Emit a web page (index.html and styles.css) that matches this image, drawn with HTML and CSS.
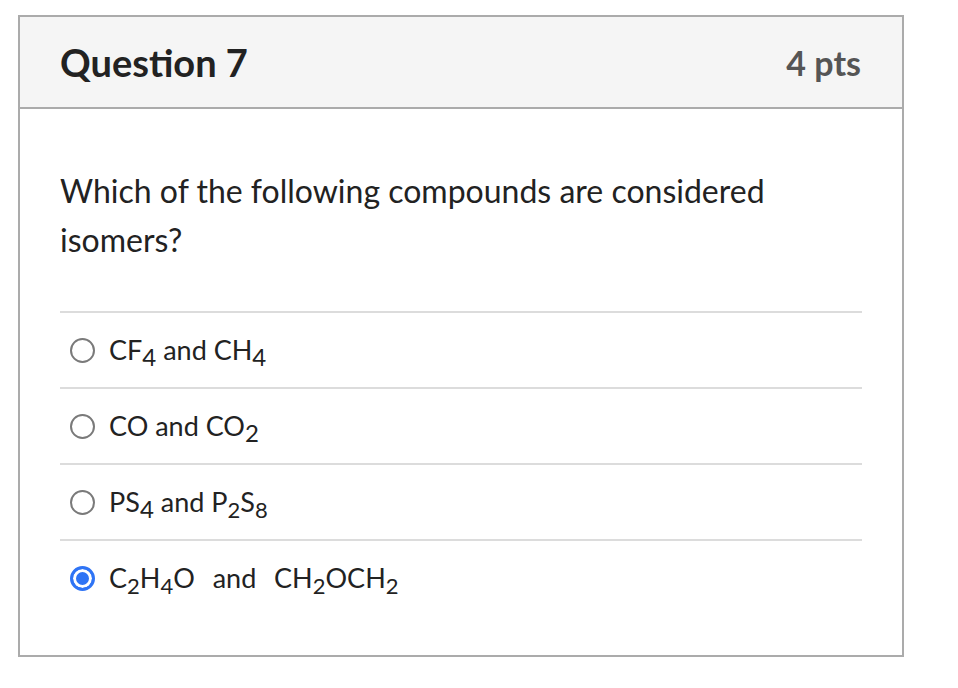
FILE: index.html
```html
<!DOCTYPE html>
<html lang="en">
<head>
<meta charset="utf-8">
<title>Question 7</title>
<link rel="stylesheet" href="styles.css">
</head>
<body>
<div class="card">
  <div class="card-header">
    <h2 class="q-title">Question 7</h2>
    <div class="q-pts">4 pts</div>
  </div>
  <div class="card-body">
    <p class="q-text">Which of the following compounds are considered isomers?</p>
    <ul class="answers">
      <li class="answer">
        <span class="radio"></span>
        <span class="label">CF<sub class="s1">4</sub> and CH<sub class="s1">4</sub></span>
      </li>
      <li class="answer">
        <span class="radio"></span>
        <span class="label">CO and CO<sub class="s1">2</sub></span>
      </li>
      <li class="answer">
        <span class="radio"></span>
        <span class="label">PS<sub class="s1">4</sub> and P<sub class="s2">2</sub>S<sub class="s2">8</sub></span>
      </li>
      <li class="answer">
        <span class="radio checked"></span>
        <span class="label wide">C<sub class="s3">2</sub>H<sub class="s3">4</sub>O&nbsp; and&nbsp; CH<sub class="s3">2</sub>OCH<sub class="s3">2</sub></span>
      </li>
    </ul>
  </div>
</div>
</body>
</html>
```

FILE: styles.css
```css
html, body {
  margin: 0;
  padding: 0;
  background: #ffffff;
}

body {
  font-family: Lato, "Noto Sans", "Liberation Sans", sans-serif;
  color: #222222;
  padding: 15px 0 0 18px;
}

.card {
  width: 882px;
  height: 638px;
  border: 2px solid #ababab;
  display: flex;
  flex-direction: column;
}

.card-header {
  height: 90px;
  background: #f5f5f5;
  border-bottom: 2px solid #ababab;
  display: flex;
  align-items: center;
  justify-content: space-between;
  padding: 0 41px 0 40px;
}

.q-title {
  margin: 0;
  font-size: 38px;
  font-weight: 700;
  color: #222222;
}

.q-pts {
  font-size: 34px;
  font-weight: 700;
  color: #555555;
}

.card-body {
  padding: 57px 40px 0 40px;
}

.q-text {
  margin: 0 0 47px 0;
  font-size: 32px;
  line-height: 49px;
}

.answers {
  list-style: none;
  margin: 0;
  padding: 0;
}

.answer {
  border-top: 2px solid #dcdcdc;
  height: 74px;
  display: flex;
  align-items: center;
  padding-left: 10px;
  gap: 14px;
}

.radio {
  box-sizing: border-box;
  width: 25px;
  height: 25px;
  border-radius: 50%;
  border: 2px solid #7a7a7a;
  background: #ffffff;
  flex: none;
}

.radio.checked {
  border: 3px solid #2f74f5;
  background: #2f74f5;
  box-shadow: inset 0 0 0 3px #ffffff;
}

.label {
  font-size: 27px;
  color: #222222;
  line-height: 30px;
}

.label.wide {
  word-spacing: 2px;
}

sub {
  line-height: 0;
  vertical-align: -6px;
}

.s1 {
  font-size: 24px;
}

.s2 {
  font-size: 22px;
}

.s3 {
  font-size: 22px;
}
```
